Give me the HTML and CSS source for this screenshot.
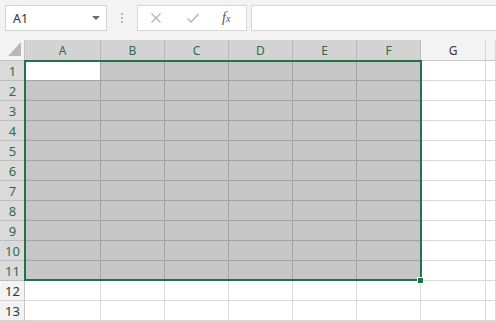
FILE: index.html
```html
<!DOCTYPE html>
<html>
<head>
<meta charset="utf-8">
<link rel="stylesheet" href="styles.css">
</head>
<body>
<div class="toolbar">
  <div class="namebox">
    <span class="ref">A1</span>
    <span class="caret"></span>
  </div>
  <div class="sep"><i></i><i></i><i></i></div>
  <div class="fxbtns">
    <svg class="ico" width="12" height="12" viewBox="0 0 12 12"><path d="M1.5 1.5 L10.5 10.5 M10.5 1.5 L1.5 10.5" stroke="#b3b3b3" stroke-width="1.3" fill="none"/></svg>
    <svg class="ico" width="14" height="12" viewBox="0 0 14 12"><path d="M1.5 6.5 L5 10 L12.5 2" stroke="#b3b3b3" stroke-width="1.4" fill="none"/></svg>
    <span class="fx">f<sub>x</sub></span>
  </div>
  <div class="formula"></div>
</div>
<div class="sheet">
  <div class="corner"><span class="tri"></span></div>
  <div class="ch sel">A</div><div class="ch sel">B</div><div class="ch sel">C</div><div class="ch sel">D</div><div class="ch sel">E</div><div class="ch sel">F</div><div class="ch">G</div><div class="ch"></div>

  <div class="rh sel">1</div><div class="c a1"></div><div class="c s"></div><div class="c s"></div><div class="c s"></div><div class="c s"></div><div class="c s"></div><div class="c"></div><div class="c"></div>
  <div class="rh sel">2</div><div class="c s"></div><div class="c s"></div><div class="c s"></div><div class="c s"></div><div class="c s"></div><div class="c s"></div><div class="c"></div><div class="c"></div>
  <div class="rh sel">3</div><div class="c s"></div><div class="c s"></div><div class="c s"></div><div class="c s"></div><div class="c s"></div><div class="c s"></div><div class="c"></div><div class="c"></div>
  <div class="rh sel">4</div><div class="c s"></div><div class="c s"></div><div class="c s"></div><div class="c s"></div><div class="c s"></div><div class="c s"></div><div class="c"></div><div class="c"></div>
  <div class="rh sel">5</div><div class="c s"></div><div class="c s"></div><div class="c s"></div><div class="c s"></div><div class="c s"></div><div class="c s"></div><div class="c"></div><div class="c"></div>
  <div class="rh sel">6</div><div class="c s"></div><div class="c s"></div><div class="c s"></div><div class="c s"></div><div class="c s"></div><div class="c s"></div><div class="c"></div><div class="c"></div>
  <div class="rh sel">7</div><div class="c s"></div><div class="c s"></div><div class="c s"></div><div class="c s"></div><div class="c s"></div><div class="c s"></div><div class="c"></div><div class="c"></div>
  <div class="rh sel">8</div><div class="c s"></div><div class="c s"></div><div class="c s"></div><div class="c s"></div><div class="c s"></div><div class="c s"></div><div class="c"></div><div class="c"></div>
  <div class="rh sel">9</div><div class="c s"></div><div class="c s"></div><div class="c s"></div><div class="c s"></div><div class="c s"></div><div class="c s"></div><div class="c"></div><div class="c"></div>
  <div class="rh sel">10</div><div class="c s"></div><div class="c s"></div><div class="c s"></div><div class="c s"></div><div class="c s"></div><div class="c s"></div><div class="c"></div><div class="c"></div>
  <div class="rh sel">11</div><div class="c s"></div><div class="c s"></div><div class="c s"></div><div class="c s"></div><div class="c s"></div><div class="c s"></div><div class="c"></div><div class="c"></div>
  <div class="rh">12</div><div class="c"></div><div class="c"></div><div class="c"></div><div class="c"></div><div class="c"></div><div class="c"></div><div class="c"></div><div class="c"></div>
  <div class="rh">13</div><div class="c"></div><div class="c"></div><div class="c"></div><div class="c"></div><div class="c"></div><div class="c"></div><div class="c"></div><div class="c"></div>

  <div class="selection"></div>
  <div class="handle"></div>
</div>
</body>
</html>
```

FILE: styles.css
```css
* { box-sizing: border-box; }
html, body {
  margin: 0;
  padding: 0;
  background: #ffffff;
  overflow: hidden;
  font-family: "Noto Sans", "Open Sans", sans-serif;
}
.toolbar {
  height: 40px;
  background: #f3f3f3;
  display: flex;
  align-items: flex-start;
  padding: 5px 0 0 5px;
  overflow: hidden;
}
.namebox {
  width: 102px;
  height: 26px;
  background: #fff;
  border: 1px solid #d2d2d2;
  display: flex;
  align-items: center;
  justify-content: space-between;
  padding: 0 6px 0 7px;
}
.ref {
  font-size: 12.5px;
  color: #333;
}
.caret {
  width: 0;
  height: 0;
  border-left: 4px solid transparent;
  border-right: 4px solid transparent;
  border-top: 4px solid #6a6a6a;
}
.sep {
  width: 30px;
  height: 26px;
  display: flex;
  flex-direction: column;
  align-items: center;
  justify-content: center;
  gap: 2px;
}
.sep i {
  display: block;
  width: 2px;
  height: 2px;
  background: #b5b5b5;
}
.fxbtns {
  width: 110px;
  height: 26px;
  background: #fff;
  border: 1px solid #d6d6d6;
  display: flex;
  align-items: center;
  padding: 0 0 0 12px;
}
.fxbtns .ico:nth-child(1) { margin-right: 24px; }
.fxbtns .ico:nth-child(2) { margin-right: 22px; }
.fx {
  font-family: "Liberation Serif", serif;
  font-style: italic;
  font-size: 14px;
  color: #555;
  line-height: 1;
}
.fx sub {
  font-size: 10px;
  vertical-align: 0;
}
.formula {
  flex: 1;
  height: 26px;
  margin-left: 4px;
  background: #fff;
  border: 1px solid #d6d6d6;
  border-right: none;
}
.sheet {
  position: relative;
  display: grid;
  grid-template-columns: 25px 76px 64px 64px 64px 64px 64px 65px 1fr;
  grid-template-rows: 21px repeat(13, 20px);
  overflow: hidden;
}
.corner {
  background: #f3f3f3;
  border-right: 1px solid #c6c6c6;
  border-bottom: 1px solid #c6c6c6;
  position: relative;
}
.tri {
  position: absolute;
  right: 3px;
  bottom: 4px;
  width: 0;
  height: 0;
  border-left: 13px solid transparent;
  border-bottom: 14px solid #b8b8b8;
}
.ch {
  background: #f3f3f3;
  border-right: 1px solid #d4d4d4;
  border-bottom: 1px solid #c6c6c6;
  font-size: 12px;
  color: #333;
  display: flex;
  align-items: center;
  justify-content: center;
  padding-top: 1px;
}
.ch.sel {
  background: #d3d3d3;
  border-right: 1px solid #b9b9b9;
  border-bottom: 1px solid #ababab;
  color: #2b6a46;
}
.rh {
  background: #f3f3f3;
  border-right: 1px solid #c6c6c6;
  border-bottom: 1px solid #d4d4d4;
  font-size: 13px;
  color: #333;
  display: flex;
  align-items: center;
  justify-content: center;
  padding-left: 1px;
}
.rh.sel {
  background: #dadada;
  border-bottom: 1px solid #bdbdbd;
  color: #2f6b4b;
}
.c {
  background: #fff;
  border-right: 1px solid #d9d9d9;
  border-bottom: 1px solid #d9d9d9;
}
.c.s {
  background: #c6c6c6;
  border-right: 1px solid #a3a3a3;
  border-bottom: 1px solid #a3a3a3;
}
.c.a1 {
  background: #fff;
  border-right: 1px solid #a3a3a3;
  border-bottom: 1px solid #a3a3a3;
}
.selection {
  position: absolute;
  left: 24px;
  top: 20px;
  width: 398px;
  height: 221px;
  border: 2px solid #217346;
  pointer-events: none;
}
.handle {
  position: absolute;
  left: 417px;
  top: 237px;
  width: 7px;
  height: 7px;
  background: #217346;
  border: 1px solid #fff;
}
```
